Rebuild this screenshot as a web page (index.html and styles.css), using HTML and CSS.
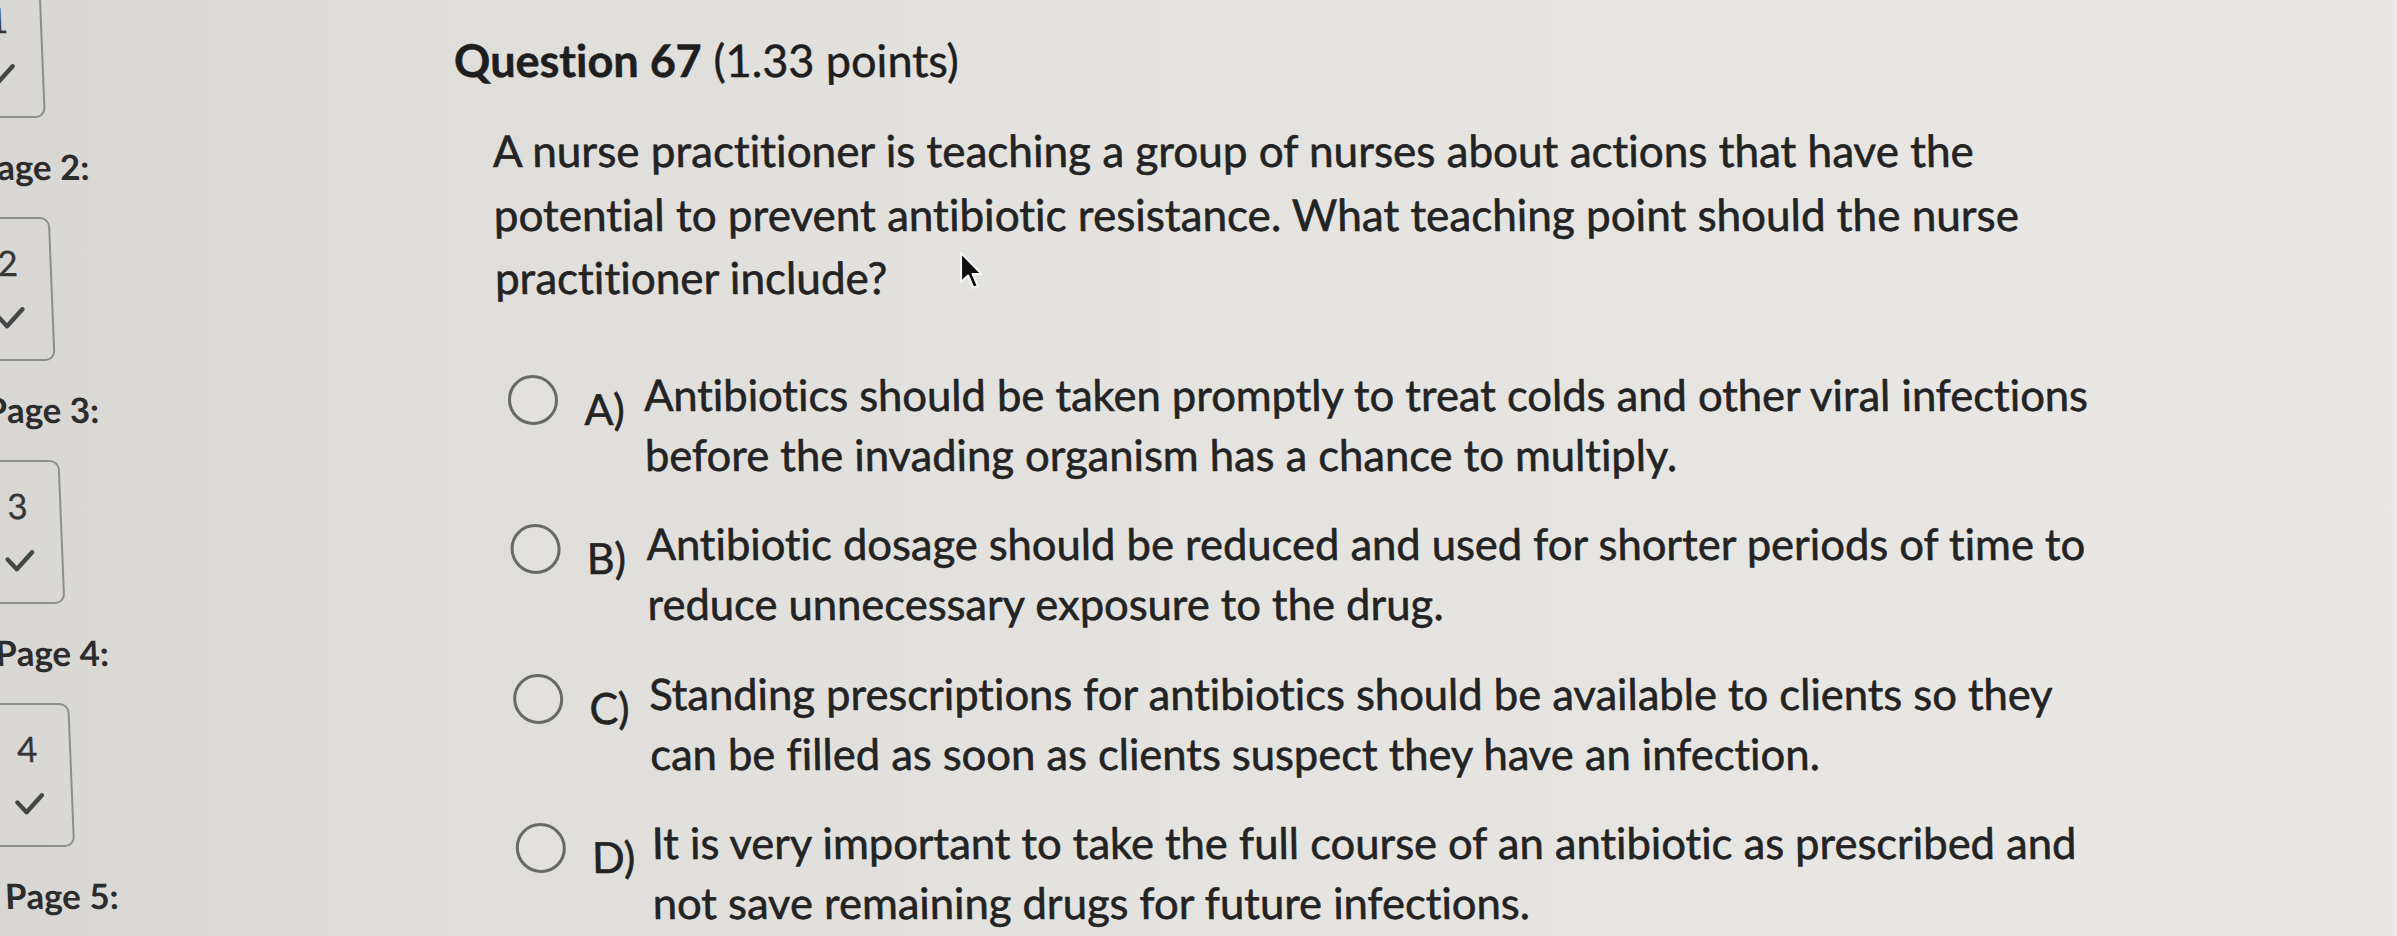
FILE: index.html
```html
<!DOCTYPE html>
<html lang="en">
<head>
<meta charset="utf-8">
<title>Question 67</title>
<link rel="stylesheet" href="styles.css">
</head>
<body>
<div class="page">
  <nav class="sidebar">
    <div class="card">
      <span class="num">1</span>
      <svg class="check" viewBox="0 0 30 24"><path d="M3 10 L11.5 19.5 L27 3"/></svg>
    </div>
    <div class="page-label">Page 2:</div>
    <div class="card">
      <span class="num">2</span>
      <svg class="check" viewBox="0 0 30 24"><path d="M3 10 L11.5 19.5 L27 3"/></svg>
    </div>
    <div class="page-label">Page 3:</div>
    <div class="card">
      <span class="num">3</span>
      <svg class="check" viewBox="0 0 30 24"><path d="M3 10 L11.5 19.5 L27 3"/></svg>
    </div>
    <div class="page-label">Page 4:</div>
    <div class="card">
      <span class="num">4</span>
      <svg class="check" viewBox="0 0 30 24"><path d="M3 10 L11.5 19.5 L27 3"/></svg>
    </div>
    <div class="page-label">Page 5:</div>
  </nav>

  <main class="main">
    <h1 class="q-title"><strong>Question 67</strong> (1.33 points)</h1>
    <p class="q-text">A nurse practitioner is teaching a group of nurses about actions that have the potential to prevent antibiotic resistance. What teaching point should the nurse practitioner include?</p>
    <div class="options">
      <label class="option">
        <span class="radio"></span>
        <span class="letter">A)</span>
        <span class="opt-text">Antibiotics should be taken promptly to treat colds and other viral infections before the invading organism has a chance to multiply.</span>
      </label>
      <label class="option">
        <span class="radio"></span>
        <span class="letter">B)</span>
        <span class="opt-text">Antibiotic dosage should be reduced and used for shorter periods of time to reduce unnecessary exposure to the drug.</span>
      </label>
      <label class="option">
        <span class="radio"></span>
        <span class="letter">C)</span>
        <span class="opt-text">Standing prescriptions for antibiotics should be available to clients so they can be filled as soon as clients suspect they have an infection.</span>
      </label>
      <label class="option">
        <span class="radio"></span>
        <span class="letter">D)</span>
        <span class="opt-text">It is very important to take the full course of an antibiotic as prescribed and not save remaining drugs for future infections.</span>
      </label>
    </div>
  </main>
</div>
<svg class="cursor" viewBox="0 0 20 31"><path d="M1.5 1.5 L1.5 24 L7 19 L11 28.5 L14.5 27 L10.5 17.8 L17.5 17.8 Z"/></svg>
</body>
</html>
```

FILE: styles.css
```css
html, body {
  margin: 0;
  padding: 0;
}

body {
  width: 2397px;
  height: 936px;
  overflow: hidden;
  position: relative;
  font-family: Lato, "Open Sans", "Liberation Sans", sans-serif;
  font-variant-ligatures: none;
  color: #232323;
  background: linear-gradient(90deg, #d8d7d3 0%, #dfdeda 20%, #e4e3df 50%, #e9e8e5 100%);
}

.page {
  display: flex;
  align-items: flex-start;
}

/* ---------- left page navigator ---------- */
.sidebar {
  flex: 0 0 150px;
  width: 150px;
  margin-left: -48px;
  margin-top: -26px;
  display: flex;
  flex-direction: column;
  align-items: flex-start;
  transform: skewX(2.3deg);
  transform-origin: 0 0;
}

.card {
  box-sizing: border-box;
  width: 88px;
  height: 144px;
  border: 2px solid #8d8d8b;
  border-radius: 10px;
  padding-top: 26px;
  display: flex;
  flex-direction: column;
  align-items: center;
}

.num {
  font-size: 35px;
  line-height: 35px;
  color: #353535;
  -webkit-text-stroke: 0.3px #353535;
}

.check {
  width: 31px;
  height: 25px;
  margin-top: 26px;
}

.check path {
  fill: none;
  stroke: #434846;
  stroke-width: 4.2;
  stroke-linecap: round;
  stroke-linejoin: round;
}

.page-label {
  margin: 31.4px 0 32.6px 0;
  padding-left: 16px;
  font-size: 35px;
  line-height: 35px;
  font-weight: 700;
  color: #2c2c2c;
  white-space: nowrap;
}

/* ---------- question ---------- */
.main {
  flex: 1 1 auto;
  padding-left: 351px;
  padding-top: 33px;
  transform: skewX(1deg);
  transform-origin: 0 0;
}

.q-title {
  margin: 0;
  font-size: 45px;
  line-height: 55px;
  font-weight: 400;
  color: #1e1e1e;
  white-space: nowrap;
  -webkit-text-stroke: 0.5px #1e1e1e;
}

.q-title strong {
  font-weight: 700;
}

.q-text {
  margin: 31px 0 0 37px;
  width: 1560px;
  font-size: 44px;
  line-height: 63.5px;
  -webkit-text-stroke: 0.6px #232323;
}

.options {
  margin: 54px 0 0 48px;
  display: flex;
  flex-direction: column;
  gap: 29.5px;
}

.option {
  display: flex;
  align-items: flex-start;
}

.radio {
  flex: 0 0 auto;
  box-sizing: border-box;
  width: 50px;
  height: 50px;
  margin-top: 11px;
  border: 3.5px solid #686868;
  border-radius: 50%;
  background: #e2e1de;
}

.letter {
  flex: 0 0 60px;
  margin-left: 26px;
  margin-top: 15px;
  font-size: 43px;
  line-height: 60px;
  -webkit-text-stroke: 0.6px #232323;
}

.opt-text {
  width: 1462px;
  font-size: 43.5px;
  line-height: 60px;
  -webkit-text-stroke: 0.6px #232323;
}

/* ---------- mouse pointer over the page ---------- */
.cursor {
  position: absolute;
  left: 959px;
  top: 251px;
  width: 26px;
  height: 40px;
}

.cursor path {
  fill: #0e0e0e;
  stroke: #f6f6f6;
  stroke-width: 1.6;
  stroke-linejoin: round;
}
```
